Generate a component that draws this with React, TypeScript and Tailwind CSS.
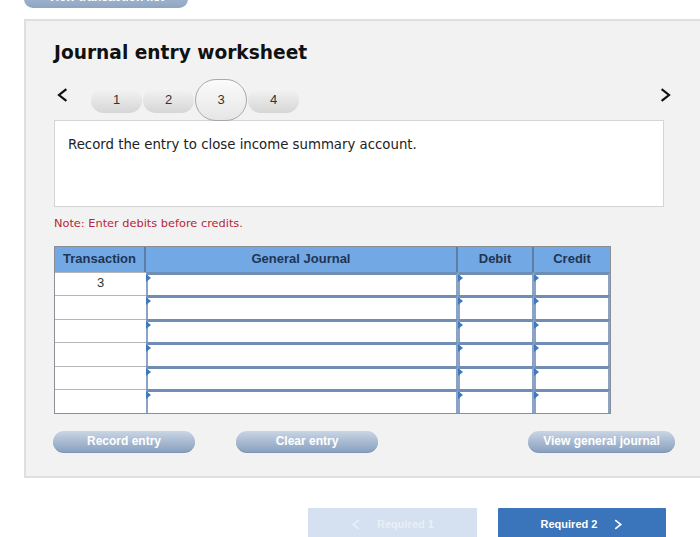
import React from "react";

const sans = "font-['Liberation_Sans',Arial,sans-serif]";
const verdana = "font-['DejaVu_Sans',Verdana,sans-serif]";

function Chevron({ dir, className }: { dir: "l" | "r"; className: string }) {
  return (
    <svg viewBox="0 0 12 14" className={className} fill="none" stroke="currentColor" strokeWidth="2.2" strokeLinecap="square">
      <path d={dir === "l" ? "M9.5 1.8 L3 7 L9.5 12.2" : "M2.5 1.8 L9 7 L2.5 12.2"} />
    </svg>
  );
}

function Pill({ n }: { n: number }) {
  return (
    <div className={`w-[51px] h-[25px] rounded-[13px] bg-gradient-to-b from-[#f4f4f4] to-[#d6d6d6] flex items-center justify-center text-[13px] text-[#333] ${sans}`}>
      {n}
    </div>
  );
}

function Action({ label, className }: { label: string; className: string }) {
  return (
    <button className={`h-[22px] rounded-[11px] bg-gradient-to-b from-[#c9d5e4] via-[#a9bbd2] to-[#8aa1bf] border-b border-[#7f95b4] text-white text-[12px] font-bold flex items-center justify-center ${sans} ${className}`}>
      {label}
    </button>
  );
}

function Cell() {
  return (
    <div className="relative h-full bg-white border-x-2 border-x-[#8aa3c6] border-t-[3px] border-t-[#6f8db5]">
      <div className="absolute -left-[2px] -top-[1px] w-0 h-0 border-y-[4px] border-y-transparent border-l-[5px] border-l-[#3f78bd]" />
    </div>
  );
}

const rows = ["3", "", "", "", "", ""];

export default function App() {
  return (
    <div className="w-[700px] h-[537px] overflow-hidden bg-white relative">
      <div className={`ml-6 -mt-[14px] w-[164px] h-[22px] rounded-[9px] bg-gradient-to-b from-[#b5c5d9] to-[#8ea5c3] text-white text-[12px] font-bold flex items-end justify-center pb-[5px] leading-none ${sans}`}>
        View transaction list
      </div>

      <div className="ml-6 mt-[11px] h-[459px] bg-[#f3f2f3] border-2 border-r-0 border-[#dfdfdf] pl-[28px] pt-[20px]">
        <h1 className={`text-[18.6px] leading-[24px] font-bold text-[#111] ${verdana}`}>Journal entry worksheet</h1>

        <div className="relative mt-[13px] w-[610px] h-[45px]">
          <Chevron dir="l" className="absolute left-[2px] top-[10px] w-[12px] h-[14px] text-[#111]" />
          <Chevron dir="r" className="absolute left-[606px] top-[10px] w-[12px] h-[14px] text-[#111]" />
          <div className="pl-[37px] flex items-center gap-[1px] h-[43px] pt-[1px]">
            <Pill n={1} />
            <Pill n={2} />
            <div className={`relative z-10 w-[52px] h-[42px] rounded-[21px] border border-[#a9a9a9] bg-gradient-to-b from-[#fbfbfb] to-[#e6e6e6] flex items-center justify-center text-[13px] text-[#333] ${sans}`}>
              3
            </div>
            <Pill n={4} />
          </div>
        </div>

        <div className={`-mt-[3px] w-[610px] h-[87px] bg-white border border-[#d4d4d4] pl-[13px] pt-[15px] text-[13.3px] leading-[18px] text-[#222] ${verdana}`}>
          Record the entry to close income summary account.
        </div>

        <p className={`mt-[9px] text-[11.35px] leading-[14px] text-[#b5263a] ${verdana}`}>Note: Enter debits before credits.</p>

        <div className="mt-[16px] w-[557px] border border-[#8a8f96] bg-[#8a8f96]">
          <div className={`grid grid-cols-[91px_312px_76px_76px] h-[25px] pb-[2px] bg-[#72a8e4] text-[13px] font-bold text-[#1f3554] ${sans}`}>
            <div className="flex items-center justify-center border-r-2 border-[#5f7ea6] -mb-[2px] pb-[2px]">Transaction</div>
            <div className="flex items-center justify-center border-r-2 border-[#5f7ea6] -mb-[2px] pb-[2px]">General Journal</div>
            <div className="flex items-center justify-center border-r-2 border-[#5f7ea6] -mb-[2px] pb-[2px]">Debit</div>
            <div className="flex items-center justify-center -mb-[2px] pb-[2px]">Credit</div>
          </div>
          {rows.map((t, i) => (
            <div key={i} className="grid grid-cols-[91px_312px_76px_76px] h-[23.45px] bg-white">
              <div className={`flex items-center justify-center bg-white border-t border-[#b5b5b5] pb-[2px] text-[13px] text-[#333] ${sans}`}>{t}</div>
              <Cell />
              <Cell />
              <Cell />
            </div>
          ))}
        </div>

        <div className="mt-[17px] w-[622px] -ml-[1px] flex">
          <Action label="Record entry" className="w-[142px]" />
          <Action label="Clear entry" className="w-[142px] ml-[41px]" />
          <Action label="View general journal" className="w-[147px] ml-auto" />
        </div>
      </div>

      <div className={`ml-[308px] mt-[30px] flex gap-[21px] text-[11px] font-bold text-white ${sans}`}>
        <div className="w-[169px] h-[33px] bg-[#d5e1f0] flex items-center justify-center gap-[17px] text-[#e9eff7]">
          <Chevron dir="l" className="w-[9px] h-[11px]" />
          Required 1
        </div>
        <div className="w-[168px] h-[33px] bg-[#3a74ba] rounded-t-[1px] flex items-center justify-center gap-[17px]">
          Required 2
          <Chevron dir="r" className="w-[9px] h-[11px]" />
        </div>
      </div>
    </div>
  );
}
